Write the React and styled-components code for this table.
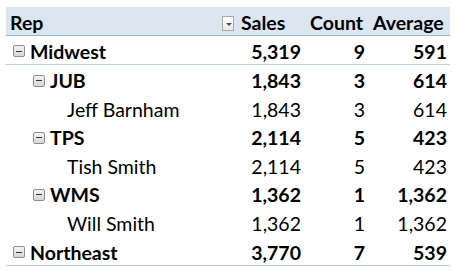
import React from 'react';
import styled, { createGlobalStyle } from 'styled-components';

const GlobalStyle = createGlobalStyle`
  html, body {
    margin: 0;
    padding: 0;
    background: #ffffff;
  }

  body {
    font-family: Lato, 'Open Sans', sans-serif;
    color: #000000;
  }
`;

const COLUMNS = '231px 69px 63px 81px';

const StyledWrapper = styled.div`
  padding: 7px 5px 0 6px;
  width: 444px;
`;

const StyledHeader = styled.div`
  display: grid;
  grid-template-columns: ${COLUMNS};
  height: 28px;
  background: #dce6f1;
  border-bottom: 1px solid #95b3d7;
  font-size: 19.5px;
  font-weight: 700;
`;

const StyledHeaderCell = styled.div`
  display: flex;
  align-items: center;
  justify-content: space-between;
  padding: ${({ first }) => (first ? '3px 3px 0 4px' : '3px 0 0 4px')};
`;

const StyledDropdown = styled.span`
  position: relative;
  width: 12px;
  height: 15px;
  margin-top: 1px;
  box-sizing: border-box;
  border: 1px solid #a8a8a8;
  background: linear-gradient(#ffffff, #e8e8e8);

  &::after {
    content: '';
    position: absolute;
    left: 3px;
    top: 6px;
    border-left: 3px solid transparent;
    border-right: 3px solid transparent;
    border-top: 3px solid #4a4a4a;
  }
`;

const StyledRow = styled.div`
  display: grid;
  grid-template-columns: ${COLUMNS};
  height: ${({ height }) => height}px;
  padding-top: 2px;
  box-sizing: border-box;
  border-bottom: ${({ ruled }) => (ruled ? '1px solid #b8cce4' : 'none')};
  font-size: 19.5px;
  font-weight: ${({ bold }) => (bold ? 700 : 400)};
`;

const StyledLabel = styled.div`
  display: flex;
  align-items: center;
  padding-left: ${({ indent }) => indent}px;
`;

const StyledToggle = styled.span`
  display: inline-flex;
  align-items: center;
  justify-content: center;
  width: 12px;
  height: 12px;
  margin-right: 5px;
  box-sizing: border-box;
  border: 1px solid #8e8e8e;
  border-radius: 2px;
  background: linear-gradient(#f4f4f4, #d6d6d6);

  &::before {
    content: '';
    width: 6px;
    height: 1px;
    background: #333333;
  }
`;

const StyledValue = styled.div`
  display: flex;
  align-items: center;
  justify-content: flex-end;
  padding-right: ${({ pad }) => pad}px;
`;

const INDENTS = [7, 27, 61];

const rows = [
  { label: 'Midwest', level: 0, sales: '5,319', count: '9', avg: '591', group: true, ruled: true, height: 29 },
  { label: 'JUB', level: 1, sales: '1,843', count: '3', avg: '614', group: true, height: 29 },
  { label: 'Jeff Barnham', level: 2, sales: '1,843', count: '3', avg: '614', height: 28 },
  { label: 'TPS', level: 1, sales: '2,114', count: '5', avg: '423', group: true, height: 29 },
  { label: 'Tish Smith', level: 2, sales: '2,114', count: '5', avg: '423', height: 28 },
  { label: 'WMS', level: 1, sales: '1,362', count: '1', avg: '1,362', group: true, height: 29 },
  { label: 'Will Smith', level: 2, sales: '1,362', count: '1', avg: '1,362', height: 29 },
  { label: 'Northeast', level: 0, sales: '3,770', count: '7', avg: '539', group: true, ruled: true, height: 29 },
];

const App = () => (
  <>
    <GlobalStyle />
    <StyledWrapper>
      <StyledHeader>
        <StyledHeaderCell first>
          Rep
          <StyledDropdown />
        </StyledHeaderCell>
        <StyledHeaderCell>Sales</StyledHeaderCell>
        <StyledHeaderCell>Count</StyledHeaderCell>
        <StyledHeaderCell>Average</StyledHeaderCell>
      </StyledHeader>
      {rows.map(row => (
        <StyledRow key={row.label} bold={row.group} ruled={row.ruled} height={row.height}>
          <StyledLabel indent={INDENTS[row.level]}>
            {row.group && <StyledToggle />}
            {row.label}
          </StyledLabel>
          <StyledValue pad={5}>{row.sales}</StyledValue>
          <StyledValue pad={4}>{row.count}</StyledValue>
          <StyledValue pad={3}>{row.avg}</StyledValue>
        </StyledRow>
      ))}
    </StyledWrapper>
  </>
);

export default App;
